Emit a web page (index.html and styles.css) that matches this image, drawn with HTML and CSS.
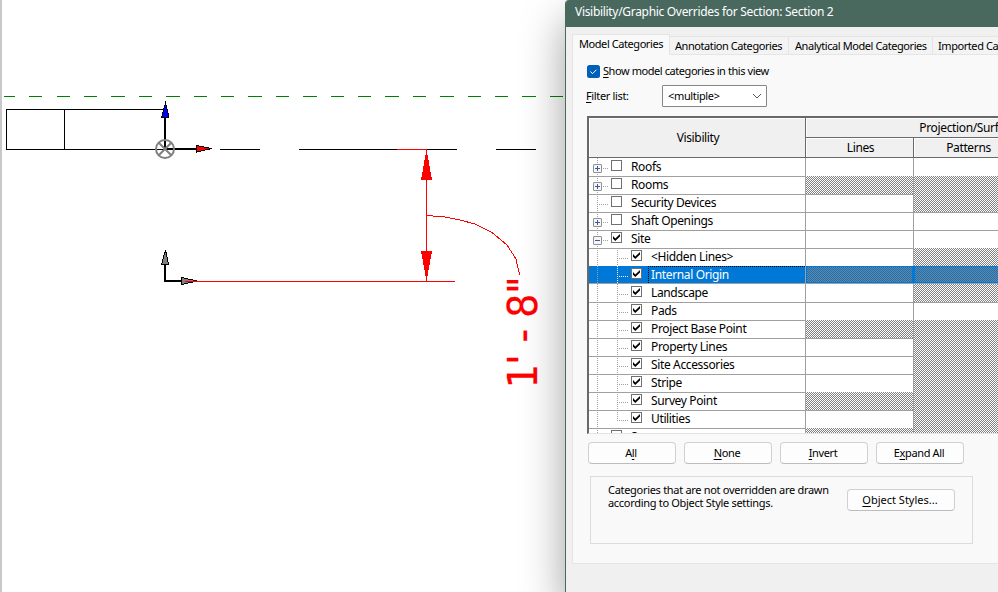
FILE: index.html
```
<!DOCTYPE html>
<html lang="en">
<head>
    <meta charset="UTF-8">
    <meta name="viewport" content="width=device-width, initial-scale=1.0">
    <title>Visibility/Graphic Overrides</title>
    <link rel="stylesheet" href="styles.css">
</head>
<body>
    <!-- Shared symbols for the tree -->
    <svg class="symbols" width="0" height="0">
        <symbol id="tick" viewBox="0 0 11 11">
            <path d="M2 4 L4.3 6.5 L9 2 V4.6 L4.3 9 L2 6.8 Z" fill="#000"/>
        </symbol>
    </svg>

    <main class="canvas">
        <svg class="drawing" width="563" height="592" viewBox="2 0 563 592" shape-rendering="crispEdges">
            <!-- Level line -->
            <path d="M4 96.5 H15 M29 96.5 H42" class="level"/>
            <path d="M56.5 96.5 H563" class="level dashes"/>

            <!-- Section outline -->
            <path d="M165 109.5 H6.5 V149.5 H165 M64.5 109 V149" class="line"/>
            <path d="M220 149.5 H260 M299 149.5 H457 M496 149.5 H536" class="line"/>

            <!-- Base point axes -->
            <path d="M165 149 V117 M165 149 H197" class="axis"/>
            <path d="M165.5 103 L169 117.5 H161.5 Z" class="head blue"/>
            <path d="M212 148.5 L196.500 152 V145.500 Z" class="head red"/>
            <g class="marker" shape-rendering="auto">
                <circle cx="165" cy="149" r="9"/>
                <path d="M159 143 L171 155 M171 143 L159 155"/>
            </g>

            <!-- Internal origin axes -->
            <path d="M165 264 V281 H182" class="axis"/>
            <path d="M165.500 250 L168.500 264.500 H161.500 Z" class="head gray"/>
            <path d="M197 281 L181.500 284.500 V277.500 Z" class="head gray"/>

            <!-- Dimension -->
            <path d="M185 281.500 H455 M397 149.500 H427 M426.500 150 V281" class="dim"/>
            <path d="M426.500 149 L432 180 H421 Z M421 251 H432 L426.500 281 Z" fill="#f00"/>
            <path d="M427 215.500 L433 216 L445 217 L460 220 L475 224 L492 232.500 L507 245 L516 259 L518 268 L520 275" class="dim"/>
            <text class="dim-text" transform="translate(537 384) rotate(-90) scale(.92 1)" x="-4.5 21 34 45 60 72 98" xml:space="preserve">1' - 8"</text>
        </svg>
    </main>

    <section class="dialog">
        <header class="titlebar"><span>Visibility/Graphic Overrides for Section: Section 2</span></header>

        <nav class="tabs">
            <div class="tab active"><span>Model Categories</span></div>
            <div class="tab annotation"><span>Annotation Categories</span></div>
            <div class="tab analytical"><span>Analytical Model Categories</span></div>
            <div class="tab imported"><span>Imported Categories</span></div>
        </nav>

        <div class="panel">
            <div class="show-row">
                <svg class="show-check" width="13" height="13" viewBox="0 0 13 13">
                    <rect width="13" height="13" rx="2.500" fill="#005fb8"/>
                    <path d="M3.500 6.500 L5.500 8.700 L9.500 4.700" fill="none" stroke="#fff"/>
                </svg>
                <span><u>S</u>how model categories in this view</span>
            </div>

            <div class="filter-row">
                <span class="filter-label"><u>F</u>ilter list:</span>
                <div class="select">
                    <span>&lt;multiple&gt;</span>
                    <svg width="10" height="6" viewBox="0 0 10 6"><path d="M1 1 L5 5 L9 1" fill="none" stroke="#555"/></svg>
                </div>
            </div>

            <div class="table">
                <div class="thead">
                    <div class="th visibility">Visibility</div>
                    <div class="th projection"><span>Projection/Surface</span></div>
                    <div class="th lines">Lines</div>
                    <div class="th patterns">Patterns</div>
                </div>

                <div class="row top">
                    <div class="name"><i class="expander plus"></i><i class="box"></i><span>Roofs</span></div>
                    <div class="cell"></div><div class="cell"></div>
                </div>
                <div class="row top">
                    <div class="name"><i class="expander plus"></i><i class="box"></i><span>Rooms</span></div>
                    <div class="cell off"></div><div class="cell off"></div>
                </div>
                <div class="row top">
                    <div class="name"><i class="expander none"></i><i class="box"></i><span>Security Devices</span></div>
                    <div class="cell"></div><div class="cell off"></div>
                </div>
                <div class="row top">
                    <div class="name"><i class="expander plus"></i><i class="box"></i><span>Shaft Openings</span></div>
                    <div class="cell"></div><div class="cell"></div>
                </div>
                <div class="row top">
                    <div class="name"><i class="expander"></i><i class="box"><svg><use href="#tick"/></svg></i><span>Site</span></div>
                    <div class="cell"></div><div class="cell"></div>
                </div>
                <div class="row child">
                    <div class="name"><i class="branch"></i><i class="box"><svg><use href="#tick"/></svg></i><span>&lt;Hidden Lines&gt;</span></div>
                    <div class="cell"></div><div class="cell off"></div>
                </div>
                <div class="row child selected">
                    <div class="name"><i class="branch"></i><i class="box"><svg><use href="#tick"/></svg></i><span>Internal Origin</span></div>
                    <div class="cell off"></div><div class="cell off"></div>
                </div>
                <div class="row child">
                    <div class="name"><i class="branch"></i><i class="box"><svg><use href="#tick"/></svg></i><span>Landscape</span></div>
                    <div class="cell"></div><div class="cell off"></div>
                </div>
                <div class="row child">
                    <div class="name"><i class="branch"></i><i class="box"><svg><use href="#tick"/></svg></i><span>Pads</span></div>
                    <div class="cell"></div><div class="cell"></div>
                </div>
                <div class="row child">
                    <div class="name"><i class="branch"></i><i class="box"><svg><use href="#tick"/></svg></i><span>Project Base Point</span></div>
                    <div class="cell off"></div><div class="cell off"></div>
                </div>
                <div class="row child">
                    <div class="name"><i class="branch"></i><i class="box"><svg><use href="#tick"/></svg></i><span>Property Lines</span></div>
                    <div class="cell"></div><div class="cell off"></div>
                </div>
                <div class="row child">
                    <div class="name"><i class="branch"></i><i class="box"><svg><use href="#tick"/></svg></i><span>Site Accessories</span></div>
                    <div class="cell"></div><div class="cell off"></div>
                </div>
                <div class="row child">
                    <div class="name"><i class="branch"></i><i class="box"><svg><use href="#tick"/></svg></i><span>Stripe</span></div>
                    <div class="cell"></div><div class="cell off"></div>
                </div>
                <div class="row child">
                    <div class="name"><i class="branch"></i><i class="box"><svg><use href="#tick"/></svg></i><span>Survey Point</span></div>
                    <div class="cell off"></div><div class="cell off"></div>
                </div>
                <div class="row child last">
                    <div class="name"><i class="branch"></i><i class="box"><svg><use href="#tick"/></svg></i><span>Utilities</span></div>
                    <div class="cell"></div><div class="cell off"></div>
                </div>
                <div class="row top">
                    <div class="name"><i class="expander none"></i><i class="box"></i><span>Spaces</span></div>
                    <div class="cell off"></div><div class="cell off"></div>
                </div>
            </div>

            <div class="buttons">
                <button class="button">A<u>l</u>l</button>
                <button class="button"><u>N</u>one</button>
                <button class="button"><u>I</u>nvert</button>
                <button class="button">E<u>x</u>pand All</button>
            </div>

            <div class="note">
                <p>Categories that are not overridden are drawn<br>according to Object Style settings.</p>
                <button class="button styles"><u>O</u>bject Styles...</button>
            </div>
        </div>
    </section>
</body>
</html>
```
FILE: styles.css
```
* {
    box-sizing: border-box;
}

body {
    margin: 0;
    display: flex;
    width: 998px;
    height: 592px;
    overflow: hidden;
    background-color: #fff;
    font-family: "Noto Sans", "Open Sans", sans-serif;
    font-size: 11px;
    letter-spacing: -0.43px;
    color: #000;
}

.symbols {
    position: absolute;
}

u {
    text-decoration: underline;
    text-underline-offset: 2px;
    text-decoration-skip-ink: none;
}

/* Drawing area */
.canvas {
    flex: 0 0 565px;
    height: 592px;
    border-left: 2px solid #c8c8c8;
}

.drawing {
    display: block;
}

.line {
    fill: none;
    stroke: #000;
}

.level {
    fill: none;
    stroke: #008000;
}

.dashes {
    stroke-dasharray: 13.5 13.9;
}

.axis {
    fill: none;
    stroke: #000;
    stroke-width: 2;
}

.head {
    stroke: #000;
}

.head.blue {
    fill: #00f;
}

.head.red {
    fill: #f00;
}

.head.gray {
    fill: #808080;
}

.marker {
    fill: none;
    stroke: #808080;
    stroke-width: 2;
}

.dim {
    fill: none;
    stroke: #f00;
}

.dim-text {
    font-family: "DejaVu Sans", sans-serif;
    font-size: 41px;
    letter-spacing: 0;
    fill: #f00;
    stroke: #f00;
    stroke-width: 0.3px;
}

/* Dialog window */
.dialog {
    flex: 0 0 433px;
    height: 592px;
    overflow: hidden;
    border-left: 1px solid #49695f;
    border-top-left-radius: 4px;
    background-color: #f0f0f0;
    box-shadow: 0 20px 44px rgba(0, 0, 0, 0.38);
}

.titlebar {
    height: 27px;
    padding-left: 9px;
    background-color: #49695f;
    color: #fff;
    font-size: 12px;
    letter-spacing: -0.31px;
    line-height: 24px;
    white-space: nowrap;
}

.tabs {
    display: flex;
    align-items: flex-end;
    height: 28px;
    padding-left: 6px;
    margin-bottom: -1px;
}

.tab {
    flex: none;
    height: 19px;
    border: 1px solid #e5e5e5;
    border-left: 0;
    background-color: #f3f3f3;
    line-height: 18px;
    padding-left: 6px;
    white-space: nowrap;
}

.tab.active {
    position: relative;
    width: 98px;
    height: 21px;
    border-left: 1px solid #e5e5e5;
    border-bottom-color: #f9f9f9;
    background-color: #f9f9f9;
    line-height: 18px;
}

.tab.annotation {
    width: 119px;
    padding-left: 5px;
}

.tab.analytical {
    width: 144px;
}

.tab.imported {
    width: 110px;
    padding-left: 5px;
}

.panel {
    width: 440px;
    height: 510px;
    margin-left: 6px;
    padding: 9px 0 0 14px;
    border: 1px solid #e5e5e5;
    background-color: #f9f9f9;
}

.show-row {
    display: flex;
    align-items: center;
    gap: 3px;
    height: 15px;
}

.show-check {
    margin-top: -1px;
}

.show-row span {
    padding-bottom: 2px;
}

.filter-row {
    display: flex;
    align-items: center;
    height: 22px;
    margin: 6px 0 9px -1px;
    letter-spacing: -0.35px;
}

.filter-label {
    width: 76px;
    padding-bottom: 2px;
}

.select {
    display: flex;
    align-items: center;
    justify-content: space-between;
    width: 105px;
    height: 22px;
    padding: 0 4px 0 5px;
    border: 1px solid #868686;
    border-radius: 1px;
    background-color: #fff;
}

.select span {
    padding-bottom: 2px;
}

/* Category table */
.table {
    width: 543px;
    height: 318px;
    overflow: hidden;
    border-left: 2px solid #696969;
    border-top: 2px solid #696969;
    border-bottom: 1px solid #e3e3e3;
    background-color: #fff;
    font-size: 12px;
    letter-spacing: -0.36px;
}

.thead {
    display: grid;
    grid-template-columns: 217px 108px 108px 108px;
    grid-template-rows: 20px 20px;
}

.th {
    display: flex;
    align-items: center;
    justify-content: center;
    padding-left: 2px;
    border-right: 1px solid #696969;
    border-bottom: 1px solid #696969;
    background-color: #f0f0f0;
    box-shadow: inset 1px 1px #fff;
}

.th.visibility {
    grid-row: span 2;
}

.th.projection {
    grid-column: span 3;
    padding-left: 1px;
}

.row {
    display: grid;
    grid-template-columns: 217px 108px 108px;
    height: 18px;
}

.name {
    display: flex;
    align-items: flex-start;
    border-right: 1px solid #a0a0a0;
    border-bottom: 1px solid #a0a0a0;
    background: repeating-linear-gradient(#a0a0a0 0 1px, transparent 1px 2px) 8px 0 / 1px 18px no-repeat;
    line-height: 18px;
    white-space: nowrap;
}

.cell {
    border-right: 1px solid #a0a0a0;
    border-bottom: 1px solid #a0a0a0;
}

.cell.off {
    background: repeating-conic-gradient(#808080 0 25%, #fff 0 50%) 0 0 / 2px 2px;
}

.expander {
    width: 9px;
    height: 9px;
    margin: 6px 9px 0 4px;
    border: 1px solid #919191;
    border-radius: 1px;
    background: linear-gradient(#3b5aa5, #3b5aa5) 1px 3px / 5px 1px no-repeat, #f6f6f6;
}

.expander.plus {
    background: linear-gradient(#3b5aa5, #3b5aa5) 1px 3px / 5px 1px no-repeat, linear-gradient(#3b5aa5, #3b5aa5) 3px 1px / 1px 5px no-repeat, #f6f6f6;
}

.expander.none {
    border-color: transparent;
    background: none;
}

/* dotted connector between the expander and the box */
.top .name {
    background: repeating-linear-gradient(#a0a0a0 0 1px, transparent 1px 2px) 8px 0 / 1px 18px no-repeat, repeating-linear-gradient(90deg, #a0a0a0 0 1px, transparent 1px 2px) 10px 10px / 10px 1px no-repeat;
}

.box {
    flex: none;
    width: 11px;
    height: 11px;
    margin: 2px 9px 0 0;
    border: 1px solid #707070;
    background-color: #fff;
}

.box svg {
    display: block;
    width: 11px;
    height: 11px;
    margin: -1px;
}

.branch {
    width: 12px;
    height: 17px;
    margin: 0 2px 0 28px;
    background: repeating-linear-gradient(#a0a0a0 0 1px, transparent 1px 2px) 0 0 / 1px 18px no-repeat, repeating-linear-gradient(90deg, #a0a0a0 0 1px, transparent 1px 2px) 0 10px / 11px 1px no-repeat;
}

.last .branch {
    height: 11px;
}

.selected .name {
    background-color: #0078d7;
    color: #fff;
}

.selected .name span {
    flex: 1;
    height: 17px;
    margin-left: -3px;
    padding-left: 2px;
    border-left: 1px dotted #000;
    border-top: 1px dotted #000;
    line-height: 16px;
}

.selected .branch {
    background: repeating-linear-gradient(#fff 0 1px, transparent 1px 2px) 0 0 / 1px 18px no-repeat, repeating-linear-gradient(90deg, #fff 0 1px, transparent 1px 2px) 0 10px / 11px 1px no-repeat;
}

.selected .cell.off {
    border-right-color: #0078d7;
    box-shadow: inset 1px 1px #0078d7, inset -1px -1px #0078d7;
    background: repeating-conic-gradient(#808080 0 25%, #0078d7 0 50%) 0 0 / 2px 2px;
}

/* Buttons */
.buttons {
    display: flex;
    gap: 8px;
    margin: 8px 0 12px 1px;
}

.button {
    width: 88px;
    height: 22px;
    padding: 0 2px 2px 0;
    border: 1px solid #d0d0d0;
    border-bottom-color: #bcbcbc;
    border-radius: 4px;
    background-color: #fdfdfd;
    font-family: inherit;
    font-size: 11px;
    letter-spacing: -0.35px;
    color: #000;
}

.note {
    display: flex;
    align-items: flex-start;
    width: 383px;
    height: 68px;
    margin-left: 3px;
    padding: 6px 0 0 17px;
    border: 1px solid #dcdcdc;
    letter-spacing: -0.3px;
}

.note p {
    width: 239px;
    margin: 0;
    line-height: 13px;
    white-space: nowrap;
}

.button.styles {
    width: 108px;
    margin-top: 6px;
    letter-spacing: 0;
}
```
